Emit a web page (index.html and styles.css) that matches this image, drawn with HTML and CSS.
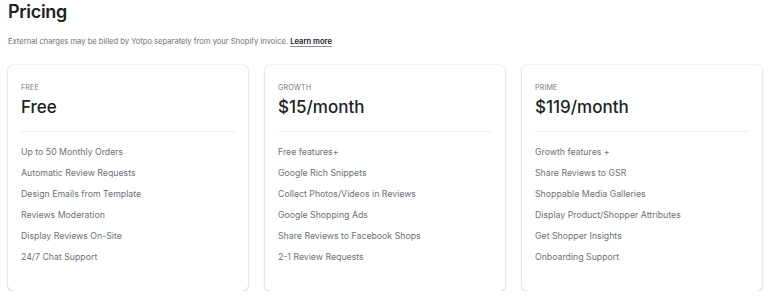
FILE: index.html
```
<!DOCTYPE html>
<html>
<head>
<meta charset="utf-8">
<link rel="stylesheet" href="styles.css">
</head>
<body>
<div class="page">
  <h1 class="title">Pricing</h1>
  <p class="note">External charges may be billed by Yotpo separately from your Shopify invoice. <a class="link" href="#">Learn more</a></p>
  <div class="plans">
    <div class="card">
      <div class="label">FREE</div>
      <div class="price">Free</div>
      <div class="divider"></div>
      <ul class="features">
        <li>Up to 50 Monthly Orders</li>
        <li>Automatic Review Requests</li>
        <li>Design Emails from Template</li>
        <li>Reviews Moderation</li>
        <li>Display Reviews On-Site</li>
        <li>24/7 Chat Support</li>
      </ul>
    </div>
    <div class="card">
      <div class="label">GROWTH</div>
      <div class="price">$15/month</div>
      <div class="divider"></div>
      <ul class="features">
        <li>Free features+</li>
        <li>Google Rich Snippets</li>
        <li>Collect Photos/Videos in Reviews</li>
        <li>Google Shopping Ads</li>
        <li>Share Reviews to Facebook Shops</li>
        <li>2-1 Review Requests</li>
      </ul>
    </div>
    <div class="card">
      <div class="label">PRIME</div>
      <div class="price">$119/month</div>
      <div class="divider"></div>
      <ul class="features">
        <li>Growth features +</li>
        <li>Share Reviews to GSR</li>
        <li>Shoppable Media Galleries</li>
        <li>Display Product/Shopper Attributes</li>
        <li>Get Shopper Insights</li>
        <li>Onboarding Support</li>
      </ul>
    </div>
  </div>
</div>
</body>
</html>
```
FILE: styles.css
```
html, body {
  margin: 0;
  padding: 0;
  background: #ffffff;
}
body {
  font-family: Inter, "Noto Sans", sans-serif;
  color: #202223;
}
.page {
  padding: 0 8px;
}
.title {
  margin: 0;
  font-size: 18px;
  line-height: 24px;
  font-weight: 600;
  letter-spacing: -0.3px;
  color: #202223;
}
.note {
  margin: 12px 0 0;
  font-size: 7.6px;
  line-height: 12px;
  color: #6d7175;
}
.link {
  color: #202223;
  font-weight: 600;
  text-decoration: underline;
  text-underline-offset: 2px;
  text-decoration-color: #8c9196;
}
.plans {
  margin-top: 17px;
  display: grid;
  grid-template-columns: repeat(3, 240px);
  column-gap: 17px;
}
.card {
  background: #ffffff;
  border-radius: 6px;
  box-shadow: 0 0 0 1px rgba(63, 63, 68, 0.04), 0 1px 3px rgba(63, 63, 68, 0.22);
  padding: 18px 13px 23px;
}
.label {
  font-size: 7.2px;
  line-height: 10px;
  color: #7a7e82;
  letter-spacing: 0.1px;
}
.price {
  margin-top: 2px;
  font-size: 17px;
  line-height: 24px;
  font-weight: 500;
  color: #202223;
}
.divider {
  margin-top: 12px;
  height: 1px;
  background: #efefef;
}
.features {
  list-style: none;
  margin: 10px 0 0;
  padding: 0;
}
.features li {
  font-size: 8.75px;
  line-height: 21px;
  color: #6d7175;
}
```
